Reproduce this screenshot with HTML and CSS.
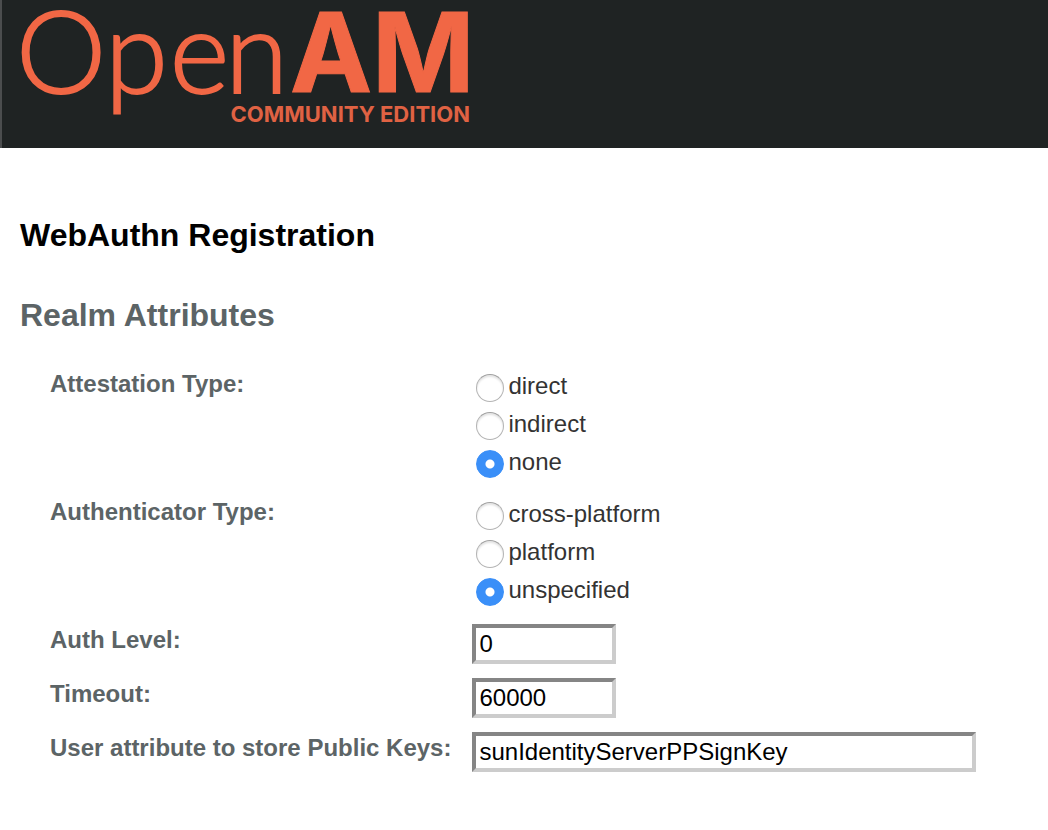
FILE: index.html
```html
<!DOCTYPE html>
<html lang="en">
<head>
<meta charset="utf-8">
<title>OpenAM - WebAuthn Registration</title>
<link rel="stylesheet" href="styles.css">
</head>
<body>
<header class="masthead">
  <svg class="logo" width="450" height="116" viewBox="0 0 450 116" role="img" aria-label="OpenAM Community Edition">
    <text class="logo-open" x="-4" y="83" dx="0 0 2 -4">Open</text>
    <text class="logo-am" x="270" y="82">AM</text>
    <text class="logo-edition" x="450" y="112" text-anchor="end">COMMUNITY EDITION</text>
  </svg>
</header>
<main class="content">
  <h1 class="page-title">WebAuthn Registration</h1>
  <h2 class="section-title">Realm Attributes</h2>
  <form class="attributes">
    <span class="name" id="attestation">Attestation Type:</span>
    <div class="options" role="radiogroup" aria-labelledby="attestation">
      <label class="option"><input class="radio" type="radio" name="attestation">direct</label>
      <label class="option"><input class="radio" type="radio" name="attestation">indirect</label>
      <label class="option"><input class="radio" type="radio" name="attestation" checked>none</label>
    </div>
    <span class="name" id="authenticator">Authenticator Type:</span>
    <div class="options" role="radiogroup" aria-labelledby="authenticator">
      <label class="option"><input class="radio" type="radio" name="authenticator">cross-platform</label>
      <label class="option"><input class="radio" type="radio" name="authenticator">platform</label>
      <label class="option"><input class="radio" type="radio" name="authenticator" checked>unspecified</label>
    </div>
    <label class="name" for="level">Auth Level:</label>
    <input class="field field-short" id="level" type="text" value="0">
    <label class="name" for="timeout">Timeout:</label>
    <input class="field field-short" id="timeout" type="text" value="60000">
    <label class="name" for="keys">User attribute to store Public Keys:</label>
    <input class="field field-long" id="keys" type="text" value="sunIdentityServerPPSignKey">
  </form>
</main>
</body>
</html>
```
FILE: styles.css
```css
* {
  box-sizing: border-box;
}

body {
  margin: 0;
  background: #fff;
  color: #333;
  font-family: "Liberation Sans", Arial, Helvetica, sans-serif;
  font-size: 24px;
}

.masthead {
  padding: 10px 18px 22px;
  border-left: 2px solid #4b4d4e;
  background: #1f2323;
}

.logo {
  display: block;
  overflow: visible;
  fill: #f16745;
}

.logo-open {
  font: 300 114px Lato, sans-serif;
  stroke: #f16745;
  stroke-width: 2px;
}

.logo-am {
  font: 700 110px Inter, sans-serif;
  stroke: #f16745;
  stroke-width: 1px;
}

.logo-edition {
  font: 700 22px Inter, sans-serif;
  fill: #e06243;
}

.content {
  padding: 67px 20px 40px;
}

.page-title,
.section-title {
  margin: 0;
  font-size: 32px;
  line-height: 40px;
}

.page-title {
  color: #000;
}

.section-title {
  margin-top: 40px;
  color: #5c6466;
}

.attributes {
  display: grid;
  grid-template-columns: max-content 1fr;
  gap: 14px 21px;
  align-items: start;
  margin-top: 33px;
  padding-left: 30px;
}

.name {
  color: #5c6466;
  font-weight: 700;
  line-height: 32px;
}

.options {
  display: flex;
  flex-direction: column;
  align-items: flex-start;
  gap: 2px;
  padding: 0 0 2px 4px;
}

.option {
  display: flex;
  gap: 4px;
  line-height: 36px;
}

.radio {
  appearance: none;
  width: 28px;
  height: 28px;
  margin: 6px 0 0;
  border: 1px solid #b4b4b4;
  border-top-color: #a0a0a0;
  border-radius: 50%;
  background: #fff;
  box-shadow: inset 0 2px 2px #e4e4e4;
}

.radio:checked {
  border-color: #3a8ff8;
  background: radial-gradient(circle, #fff 4px, #3a8ff8 5px);
  box-shadow: none;
}

.field {
  height: 40px;
  padding: 0 3px;
  border: 4px solid;
  border-color: #858585 #ccc #ccc #858585;
  background: #fff;
  color: #000;
  font: inherit;
}

.field-short {
  width: 144px;
}

.field-long {
  width: 504px;
  max-width: 100%;
}
```
